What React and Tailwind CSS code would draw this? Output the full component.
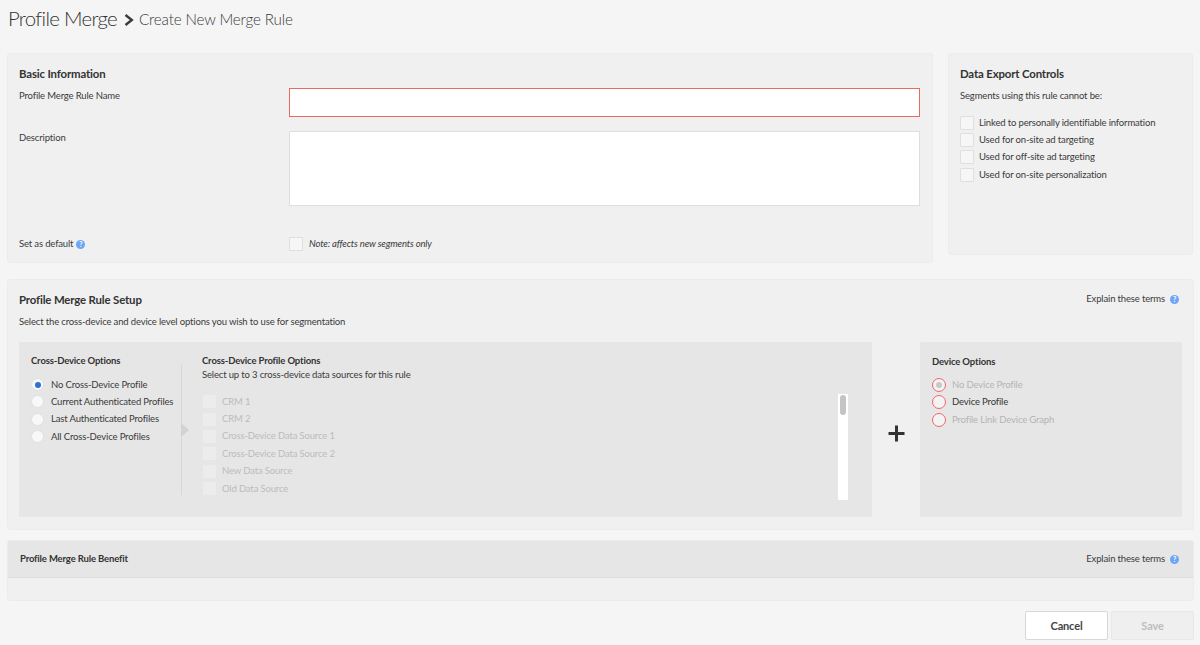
import React from "react";

function Help() {
  return (
    <span className="inline-flex w-[9px] h-[9px] shrink-0 rounded-full bg-[#6ea6f5] text-white text-[7px] font-bold items-center justify-center leading-none tracking-normal">?</span>
  );
}

function Box() {
  return <span className="block w-[14px] h-[14px] shrink-0 bg-[#f6f6f6] border border-[#dfdfdf] rounded-[1px]" />;
}

function Check({ label }) {
  return (
    <div className="flex items-center gap-[5px] h-[17.33px]">
      <Box />
      <span className="whitespace-nowrap">{label}</span>
    </div>
  );
}

function Radio({ label, selected }) {
  return (
    <div className="flex items-center gap-[7px] h-[17.33px]">
      <span className="flex shrink-0 items-center justify-center w-[13px] h-[13px] rounded-full bg-[#f8f8f8] border border-[#e0e0e0]">
        {selected && <span className="w-[6px] h-[6px] rounded-full bg-[#2f6fd3]" />}
      </span>
      <span className="whitespace-nowrap">{label}</span>
    </div>
  );
}

function RedRadio({ label, dim, dot }) {
  return (
    <div className={"flex items-center gap-[6px] h-[17.5px] " + (dim ? "text-[#b4b4b4]" : "text-[#333333]")}>
      <span className="flex shrink-0 items-center justify-center w-[14px] h-[14px] rounded-full bg-[#f3f3f3] border border-[#f0666a]">
        {dot && <span className="w-[6px] h-[6px] rounded-full bg-[#c8c8c8]" />}
      </span>
      <span className="whitespace-nowrap">{label}</span>
    </div>
  );
}

function Disabled({ label }) {
  return (
    <div className="flex items-center gap-[6px] h-[17.4px] text-[#bcbcbc]">
      <span className="block w-[13px] h-[13px] ml-[1px] shrink-0 bg-[#ececec]" />
      <span className="whitespace-nowrap">{label}</span>
    </div>
  );
}

export default function App() {
  return (
    <div className="w-[1200px] h-[645px] overflow-hidden bg-[#f5f5f5] text-[#3a3a3a] text-[9.5px] tracking-[-0.15px] leading-[14px] font-['Lato',sans-serif] px-[7px]">
      <div className="h-[53px] pt-[3px] pl-[1px] flex items-start">
        <span className="text-[20.4px] leading-[30px] text-[#333333] font-light tracking-[-0.7px]">Profile Merge</span>
        <svg width="10" height="12" viewBox="0 0 10 12" className="ml-[7px] mt-[11px] shrink-0"><path d="M1.5 1 L7.8 6 L1.5 11" fill="none" stroke="#3a3a3a" strokeWidth="2.4" /></svg>
        <span className="ml-[5px] mt-[3px] text-[15.2px] leading-[27px] text-[#3a3a3a] font-light tracking-[-0.15px]">Create New Merge Rule</span>
      </div>

      <div className="flex items-start gap-[15px]">
        <section className="w-[926px] h-[210px] bg-[#f0f0f0] border border-[#ececec] rounded-[3px] pl-[11px] pr-[12px] pt-[12px]">
          <h2 className="text-[11.4px] leading-[16px] font-bold text-[#333333]">Basic Information</h2>
          <div className="flex mt-[5px]">
            <label className="w-[270px] pt-[2px]">Profile Merge Rule Name</label>
            <div className="flex-1 h-[29px] mt-[1px] bg-white border border-[#ea6a62]" />
          </div>
          <div className="flex mt-[14px]">
            <label className="w-[270px]">Description</label>
            <div className="flex-1 h-[75px] bg-white border border-[#dedede]" />
          </div>
          <div className="flex items-center mt-[31px]">
            <label className="w-[270px] flex items-center gap-[3px]">Set as default <Help /></label>
            <Box />
            <span className="ml-[6px] italic">Note: affects new segments only</span>
          </div>
        </section>

        <aside className="w-[245px] h-[202px] bg-[#f0f0f0] border border-[#ececec] rounded-[3px] pl-[11px] pt-[12px]">
          <h2 className="text-[11.4px] leading-[16px] font-bold text-[#333333]">Data Export Controls</h2>
          <p className="mt-[7px] mb-[11px]">Segments using this rule cannot be:</p>
          <Check label="Linked to personally identifiable information" />
          <Check label="Used for on-site ad targeting" />
          <Check label="Used for off-site ad targeting" />
          <Check label="Used for on-site personalization" />
        </aside>
      </div>

      <section className="mt-[16px] w-[1187px] h-[251px] bg-[#f0f0f0] border border-[#ececec] rounded-[3px] px-[11px] pt-[12px]">
        <div className="flex items-start justify-between h-[23px]">
          <h2 className="text-[11.4px] leading-[16px] font-bold text-[#333333]">Profile Merge Rule Setup</h2>
          <span className="flex items-center gap-[5px] mr-[3px]">Explain these terms <Help /></span>
        </div>
        <p className="h-[27px]">Select the cross-device and device level options you wish to use for segmentation</p>
        <div className="flex items-stretch h-[175px]">
          <div className="w-[853px] bg-[#e6e6e6] pl-[12px] pt-[12px] flex">
            <div className="w-[150px]">
              <h3 className="font-bold text-[#333333] mb-[8px]">Cross-Device Options</h3>
              <Radio label="No Cross-Device Profile" selected />
              <Radio label="Current Authenticated Profiles" />
              <Radio label="Last Authenticated Profiles" />
              <Radio label="All Cross-Device Profiles" />
            </div>
            <div className="relative w-px h-[131px] mt-[10px] bg-[#d7d7d7]">
              <svg width="9" height="14" viewBox="0 0 9 14" className="absolute left-0 top-[59px]"><path d="M0 0 L8 7 L0 14 Z" fill="#d2d2d2" /></svg>
            </div>
            <div className="ml-[20px] flex-1 pr-[24px]">
              <h3 className="font-bold text-[#333333]">Cross-Device Profile Options</h3>
              <p>Select up to 3 cross-device data sources for this rule</p>
              <div className="flex justify-between items-start mt-[6px]">
                <div className="pt-[5px] h-[112px] overflow-hidden">
                  <Disabled label="CRM 1" />
                  <Disabled label="CRM 2" />
                  <Disabled label="Cross-Device Data Source 1" />
                  <Disabled label="Cross-Device Data Source 2" />
                  <Disabled label="New Data Source" />
                  <Disabled label="Old Data Source" />
                  <Disabled label="" />
                </div>
                <div className="w-[10px] h-[106px] mt-[6px] bg-white pt-[1px] pl-[2px]">
                  <div className="w-[6px] h-[20px] bg-[#c4c4c4] rounded-[3px]" />
                </div>
              </div>
            </div>
          </div>
          <div className="w-[48px] flex items-center justify-center">
            <svg width="17" height="17" viewBox="0 0 17 17" className="mt-[8px]"><path d="M8.5 0.5 V16.5 M0.5 8.5 H16.5" stroke="#333333" strokeWidth="3" fill="none" /></svg>
          </div>
          <div className="w-[262px] bg-[#e6e6e6] rounded-[2px] pl-[12px] pt-[13px]">
            <h3 className="font-bold text-[#333333] mb-[7px]">Device Options</h3>
            <RedRadio label="No Device Profile" dim dot />
            <RedRadio label="Device Profile" />
            <RedRadio label="Profile Link Device Graph" dim />
          </div>
        </div>
      </section>

      <section className="mt-[10px] w-[1187px] h-[61px] bg-[#f0f0f0] border border-[#ececec] rounded-[3px]">
        <div className="h-[37px] bg-[#e6e6e6] border-b border-[#dcdcdc] flex items-center justify-between pl-[12px] pr-[14px]">
          <h3 className="font-bold text-[#333333]">Profile Merge Rule Benefit</h3>
          <span className="flex items-center gap-[5px]">Explain these terms <Help /></span>
        </div>
      </section>

      <div className="mt-[10px] w-[1187px] flex justify-end gap-[3px]">
        <button className="w-[83px] h-[29px] bg-white border border-[#d8d8d8] rounded-[2px] text-[11px] font-bold text-[#444444]">Cancel</button>
        <button className="w-[83px] h-[29px] bg-[#efefef] border border-[#e8e8e8] rounded-[2px] text-[11px] font-bold text-[#bdbdbd]">Save</button>
      </div>
    </div>
  );
}
